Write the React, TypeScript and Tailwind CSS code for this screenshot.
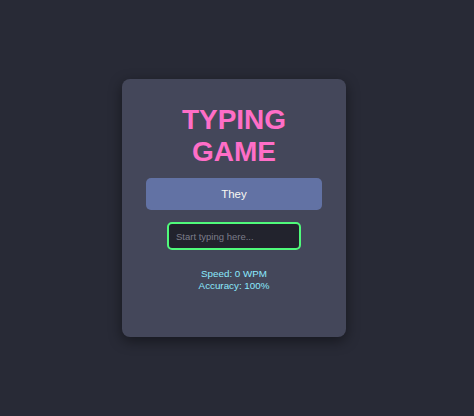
import { useState } from "react";

export default function App() {
  const [text, setText] = useState("");

  return (
    <main className="min-h-screen bg-[#282a36] flex items-center justify-center pr-[6px] font-['Liberation_Sans',Arial,sans-serif]">
      <div className="w-[224px] rounded-[8px] bg-[#44475a] px-[24px] pt-[25px] pb-[46px] text-center shadow-[0_4px_14px_rgba(0,0,0,0.45)]">
        <h1 className="text-[28px] leading-[32px] font-bold text-[#ff6ec7]">TYPING GAME</h1>

        <div className="mt-[10px] h-[32px] rounded-[5px] bg-[#6272a4] text-[#f8f8f2] text-[11.5px] flex items-center justify-center">
          They
        </div>

        <input
          autoFocus
          className="mt-[12px] w-[134px] h-[28px] rounded-[5px] border-2 border-[#50fa7b] bg-[#22232d] px-[7px] text-[9.5px] text-[#f8f8f2] placeholder:text-[#7c7d8a] outline-none"
          placeholder="Start typing here..."
          value={text}
          onChange={(e) => setText(e.target.value)}
        />

        <div className="mt-[18px] text-[9.8px] leading-[11.3px] text-[#8be9fd]">
          <div>Speed: 0 WPM</div>
          <div>Accuracy: 100%</div>
        </div>
      </div>
    </main>
  );
}
